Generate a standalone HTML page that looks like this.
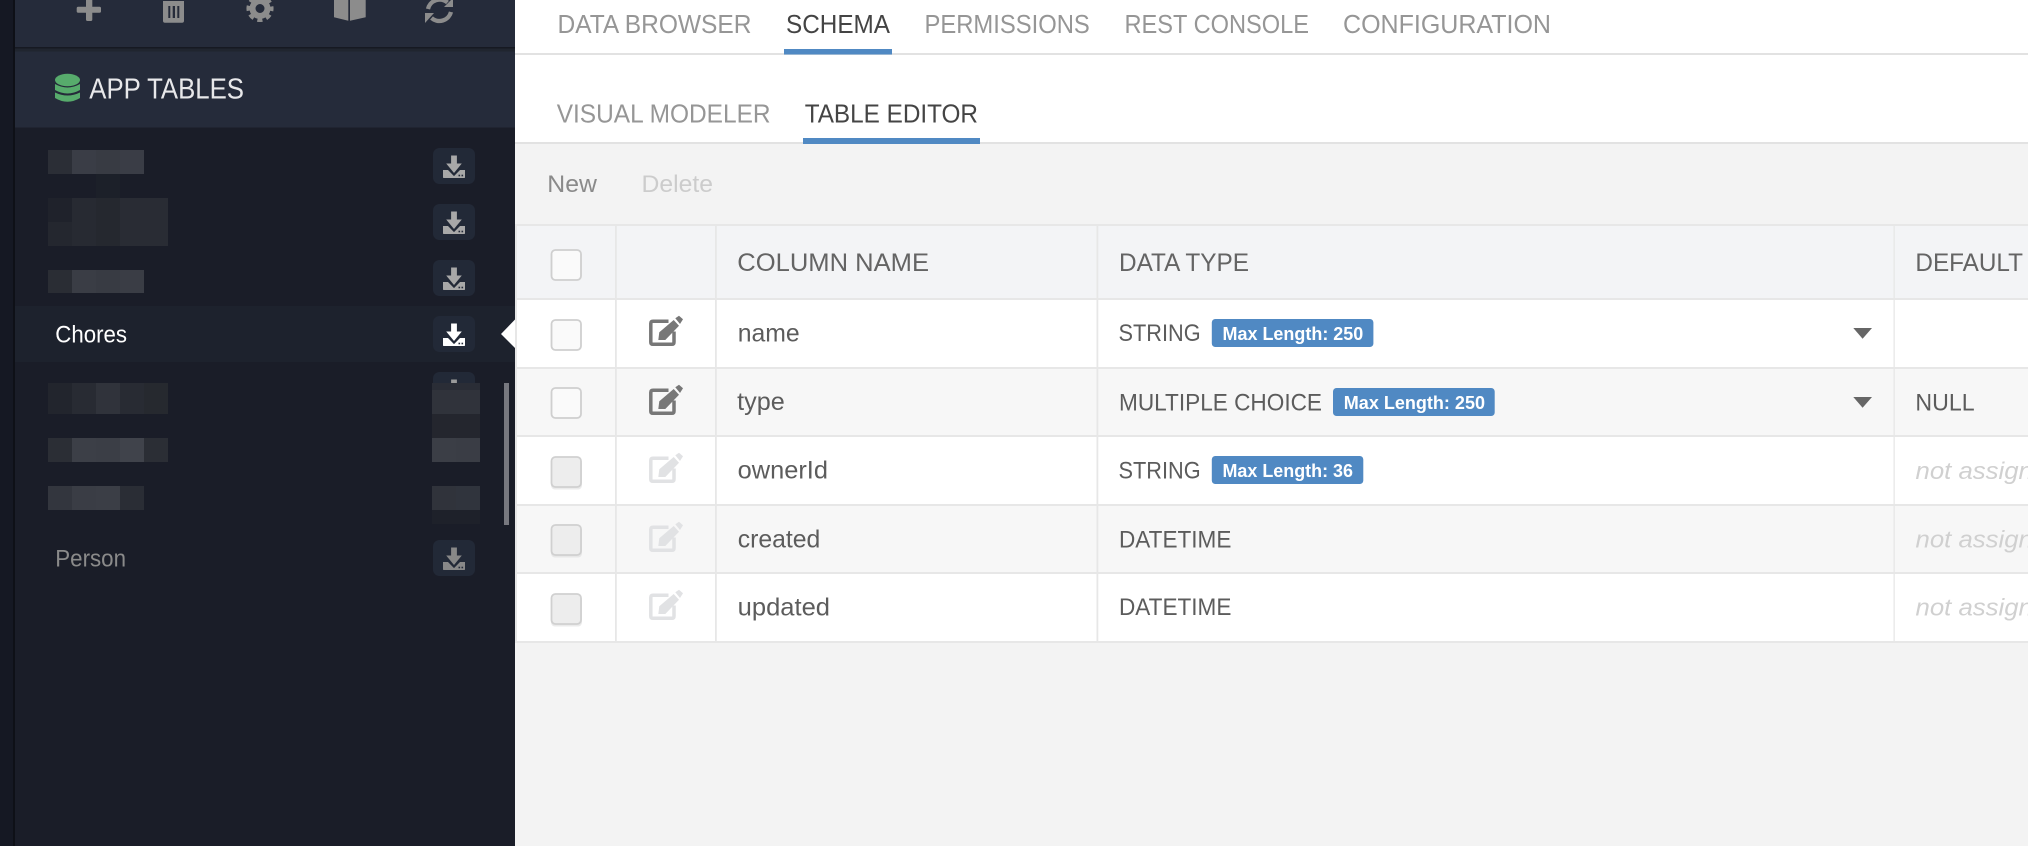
<!DOCTYPE html>
<html>
<head>
<meta charset="utf-8">
<title>App Tables Schema</title>
<style>
html,body{margin:0;padding:0;width:2028px;height:846px;overflow:hidden;background:#f3f3f3}
svg{display:block}
text{font-family:"Liberation Sans",Arial,sans-serif}
.tab{font-size:25.5px;fill:#969696}
.act{fill:#444}
.hd{font-size:25.3px;fill:#646464}
.cell{font-size:24px;fill:#5c5c5c}
.low{font-size:25px;fill:#5c5c5c}
.badge{font-size:18.5px;font-weight:bold;fill:#fff}
.na{font-size:24.5px;font-style:italic;fill:#d0d0d0}
</style>
</head>
<body>
<svg width="2028" height="846" viewBox="0 0 2028 846" xmlns="http://www.w3.org/2000/svg">
<defs>
<g id="dl">
  <path d="M8.100 0H13.900V8H18.800L11 17.500L3.200 8H8.100Z" fill="currentColor"/>
  <path d="M0 14.500H5L11 20.600L17 14.500H22V21.700Q22 22.500 21.200 22.500H0.800Q0 22.500 0 21.700Z" fill="currentColor"/>
  <rect x="15.500" y="19.200" width="1.600" height="1.600" fill="#222937"/>
  <rect x="18.500" y="19.200" width="1.600" height="1.600" fill="#222937"/>
</g>
<g id="edit">
  <path d="M19.500 5.200H4Q1.800 5.200 1.800 7.400V26.100Q1.800 28.300 4 28.300H22.800Q25 28.300 25 26.100V15.500" fill="none" stroke="currentColor" stroke-width="3.500"/>
  <path d="M9.300 24L10.300 16.300L24.700 4L30 9.700L16.300 24Z" fill="currentColor"/>
  <path d="M26.300 2.300L30 -0.300L34 3.300L31 8Z" fill="currentColor"/>
</g>
</defs>

<!-- main -->
<rect width="2028" height="846" fill="#f3f3f3"/>
<rect x="515" y="0" width="1513" height="144" fill="#fff"/>
<rect x="515" y="53" width="1513" height="2" fill="#e2e2e2"/>
<rect x="784" y="49" width="108" height="5.500" fill="#5089c3"/>
<text class="tab" x="557.500" y="33" textLength="194" lengthAdjust="spacingAndGlyphs">DATA BROWSER</text>
<text class="tab act" x="786" y="33" textLength="104" lengthAdjust="spacingAndGlyphs">SCHEMA</text>
<text class="tab" x="924.500" y="33" textLength="165.300" lengthAdjust="spacingAndGlyphs">PERMISSIONS</text>
<text class="tab" x="1124.500" y="33" textLength="184.500" lengthAdjust="spacingAndGlyphs">REST CONSOLE</text>
<text class="tab" x="1343" y="33" textLength="208" lengthAdjust="spacingAndGlyphs">CONFIGURATION</text>

<rect x="515" y="142" width="1513" height="2" fill="#e2e2e2"/>
<rect x="803" y="138" width="177" height="6" fill="#5089c3"/>
<text class="tab" x="556.700" y="122.300" textLength="213.900" lengthAdjust="spacingAndGlyphs">VISUAL MODELER</text>
<text class="tab act" x="804.700" y="122.300" textLength="173.300" lengthAdjust="spacingAndGlyphs">TABLE EDITOR</text>

<text x="547.300" y="192" font-size="24.500" fill="#8a8a8a" textLength="49.600" lengthAdjust="spacingAndGlyphs">New</text>
<text x="641.500" y="192" font-size="24.500" fill="#cccccc" textLength="71.500" lengthAdjust="spacingAndGlyphs">Delete</text>

<!-- table -->
<rect x="515" y="226" width="1513" height="73" fill="#f3f4f6"/>
<rect x="515" y="299" width="1513" height="69" fill="#ffffff"/>
<rect x="515" y="368" width="1513" height="68" fill="#f7f7f7"/>
<rect x="515" y="436" width="1513" height="69" fill="#ffffff"/>
<rect x="515" y="505" width="1513" height="68" fill="#f7f7f7"/>
<rect x="515" y="573" width="1513" height="69" fill="#ffffff"/>
<g fill="#e7e7e7">
  <rect x="515" y="224" width="1513" height="2"/>
  <rect x="515" y="298" width="1513" height="2"/>
  <rect x="515" y="367" width="1513" height="2"/>
  <rect x="515" y="435" width="1513" height="2"/>
  <rect x="515" y="504" width="1513" height="2"/>
  <rect x="515" y="572" width="1513" height="2"/>
  <rect x="515" y="641" width="1513" height="2"/>
  <rect x="515" y="224" width="2" height="419"/>
  <rect x="615" y="224" width="1.800" height="419"/>
  <rect x="715" y="224" width="1.800" height="419"/>
  <rect x="1096.500" y="224" width="1.800" height="419"/>
  <rect x="1893.500" y="224" width="1.300" height="419"/>
</g>

<!-- checkboxes -->
<g fill="#fafafa" stroke="#cfcfcf" stroke-width="1.800">
  <rect x="551.500" y="250" width="29.500" height="30" rx="4"/>
  <rect x="551.500" y="320" width="29.500" height="30" rx="4"/>
  <rect x="551.500" y="388" width="29.500" height="30" rx="4"/>
</g>
<g fill="#d8d8d8" opacity="0.5">
  <rect x="551" y="459" width="31" height="30.500" rx="4"/>
  <rect x="551" y="527" width="31" height="30.500" rx="4"/>
  <rect x="551" y="596" width="31" height="30.500" rx="4"/>
</g>
<g fill="#ededed" stroke="#d0d0d0" stroke-width="1.800">
  <rect x="551.500" y="457" width="29.500" height="30" rx="4"/>
  <rect x="551.500" y="525" width="29.500" height="30" rx="4"/>
  <rect x="551.500" y="594" width="29.500" height="30" rx="4"/>
</g>

<!-- edit icons -->
<use href="#edit" x="649" y="316" color="#777777"/>
<use href="#edit" x="649" y="385" color="#777777"/>
<use href="#edit" x="649" y="453" color="#e1e2e4"/>
<use href="#edit" x="649" y="522" color="#e1e2e4"/>
<use href="#edit" x="649" y="590" color="#e1e2e4"/>

<!-- headers -->
<text class="hd" x="737.300" y="271.200" textLength="191.700" lengthAdjust="spacingAndGlyphs">COLUMN NAME</text>
<text class="hd" x="1119" y="271.200" textLength="130" lengthAdjust="spacingAndGlyphs">DATA TYPE</text>
<text class="hd" x="1915.400" y="271.200" textLength="107.600" lengthAdjust="spacingAndGlyphs">DEFAULT</text>

<!-- col names -->
<text class="low" x="737.700" y="341.500" textLength="62" lengthAdjust="spacingAndGlyphs">name</text>
<text class="low" x="737.200" y="410" textLength="47.600" lengthAdjust="spacingAndGlyphs">type</text>
<text class="low" x="737.700" y="478.700" textLength="90.300" lengthAdjust="spacingAndGlyphs">ownerId</text>
<text class="low" x="737.700" y="547.500" textLength="82.600" lengthAdjust="spacingAndGlyphs">created</text>
<text class="low" x="737.700" y="615.500" textLength="92.300" lengthAdjust="spacingAndGlyphs">updated</text>

<!-- data types -->
<text class="cell" x="1118.500" y="341" textLength="82.100" lengthAdjust="spacingAndGlyphs">STRING</text>
<rect x="1211.800" y="319" width="161.600" height="28" rx="3.500" fill="#5089c3"/>
<text class="badge" x="1222.500" y="339.800" textLength="140.800" lengthAdjust="spacingAndGlyphs">Max Length: 250</text>
<path d="M1853.300 328H1872L1862.600 338.700Z" fill="#666"/>

<text class="cell" x="1119" y="410.400" textLength="203" lengthAdjust="spacingAndGlyphs">MULTIPLE CHOICE</text>
<rect x="1333" y="388" width="161.700" height="28" rx="3.500" fill="#5089c3"/>
<text class="badge" x="1343.800" y="408.800" textLength="141.200" lengthAdjust="spacingAndGlyphs">Max Length: 250</text>
<path d="M1853.300 397H1872L1862.600 407.700Z" fill="#666"/>

<text class="cell" x="1118.500" y="478.300" textLength="82.100" lengthAdjust="spacingAndGlyphs">STRING</text>
<rect x="1211.800" y="456" width="151.500" height="28" rx="3.500" fill="#5089c3"/>
<text class="badge" x="1222.500" y="477" textLength="130.500" lengthAdjust="spacingAndGlyphs">Max Length: 36</text>

<text class="cell" x="1119" y="547.300" textLength="112.400" lengthAdjust="spacingAndGlyphs">DATETIME</text>
<text class="cell" x="1119" y="615" textLength="112.400" lengthAdjust="spacingAndGlyphs">DATETIME</text>

<!-- default -->
<text class="cell" x="1915.400" y="410.400" textLength="59.200" lengthAdjust="spacingAndGlyphs">NULL</text>
<text class="na" x="1915.500" y="479" textLength="146" lengthAdjust="spacingAndGlyphs">not assigned</text>
<text class="na" x="1915.500" y="547.300" textLength="146" lengthAdjust="spacingAndGlyphs">not assigned</text>
<text class="na" x="1915.500" y="615.700" textLength="146" lengthAdjust="spacingAndGlyphs">not assigned</text>

<!-- sidebar -->
<rect x="0" y="0" width="515" height="846" fill="#1a1d28"/>
<rect x="0" y="0" width="13" height="846" fill="#151823"/>
<rect x="13" y="0" width="2" height="846" fill="#0e1017"/>
<rect x="15" y="0" width="500" height="127.500" fill="#252b3a"/>
<rect x="15" y="47" width="500" height="1.500" fill="#161922"/>
<rect x="15" y="48.500" width="500" height="3" fill="#20252f"/>
<text x="-7" y="191" font-size="15" fill="#8a8a8a">s</text>

<!-- toolbar icons -->
<g fill="#8c8c8c">
  <rect x="76.700" y="6.700" width="24.300" height="6" rx="1.500"/>
  <rect x="86" y="-3" width="6.300" height="24" rx="1.500"/>
  <path fill-rule="evenodd" d="M163 1H184V20.800Q184 22.800 182 22.800H165Q163 22.800 163 20.800ZM168.300 6V18H170.300V6ZM172.700 6V18H175V6ZM177.300 6V18H179.300V6Z"/>
  <path d="M334 -2H348.300V20.700L334 17.300ZM350 -2H365.700V17.300L350 20.700Z"/>
  <path d="M453 -2V7H444Z"/>
  <path d="M425 13H434L425 23Z"/>
</g>
<circle cx="260" cy="8.500" r="7.500" fill="none" stroke="#8c8c8c" stroke-width="6"/>
<circle cx="260" cy="8.500" r="11.300" fill="none" stroke="#8c8c8c" stroke-width="4.500" stroke-dasharray="5 3.880" stroke-dashoffset="2.500"/>
<path d="M428 9A12 12 0 0 1 447.500 2.500" fill="none" stroke="#8c8c8c" stroke-width="4.300"/>
<path d="M451 12A12 12 0 0 1 431.500 18" fill="none" stroke="#8c8c8c" stroke-width="4.300"/>

<!-- db icon -->
<g fill="#57ab6c">
  <ellipse cx="67.500" cy="80" rx="12.500" ry="6.200"/>
  <path d="M55 84Q67.500 91 80 84V90Q67.500 97 55 90Z"/>
  <path d="M55 92.500Q67.500 98.500 80 92.500V98Q67.500 105.500 55 98Z"/>
</g>
<text x="89.300" y="98.500" font-size="29" fill="#e8e8ea" textLength="154.700" lengthAdjust="spacingAndGlyphs">APP TABLES</text>

<!-- list buttons -->
<rect x="15" y="306" width="500" height="56" fill="#1d222d"/>
<g fill="#222937">
  <rect x="433" y="148" width="42" height="36" rx="6.500"/>
  <rect x="433" y="204" width="42" height="36" rx="6.500"/>
  <rect x="433" y="260" width="42" height="36" rx="6.500"/>
  <rect x="433" y="316" width="42" height="36" rx="6.500"/>
  <rect x="433" y="372" width="42" height="36" rx="6.500"/>
  <rect x="433" y="540" width="42" height="36" rx="6.500"/>
</g>
<use href="#dl" x="443" y="155.500" color="#a8a8a8"/>
<use href="#dl" x="443" y="211.500" color="#a8a8a8"/>
<use href="#dl" x="443" y="267.500" color="#a8a8a8"/>
<use href="#dl" x="443" y="323.500" color="#ffffff"/>
<use href="#dl" x="443" y="379.500" color="#9a9a9a"/>
<use href="#dl" x="443" y="547.500" color="#888888"/>
<text x="55.300" y="342.500" font-size="24" fill="#ffffff" textLength="71.700" lengthAdjust="spacingAndGlyphs">Chores</text>
<text x="55.300" y="566.500" font-size="24" fill="#8a8a8a" textLength="70.700" lengthAdjust="spacingAndGlyphs">Person</text>
<path d="M515 319.500V348L501 334Z" fill="#fff"/>

<!-- pixelated blocks -->
<g shape-rendering="crispEdges">
  <rect x="48" y="150" width="24" height="24" fill="#2b2e36"/>
  <rect x="72" y="150" width="24" height="24" fill="#3a3d46"/>
  <rect x="96" y="150" width="24" height="24" fill="#383b43"/>
  <rect x="120" y="150" width="24" height="24" fill="#3a3d46"/>
  <rect x="96" y="174" width="24" height="24" fill="#1c2029"/>
  <rect x="48" y="198" width="24" height="24" fill="#1f222b"/>
  <rect x="48" y="222" width="24" height="24" fill="#24272f"/>
  <rect x="72" y="198" width="24" height="48" fill="#272a32"/>
  <rect x="96" y="198" width="24" height="48" fill="#25282f"/>
  <rect x="120" y="198" width="48" height="48" fill="#292c34"/>
  <rect x="48" y="270" width="24" height="23" fill="#2a2d34"/>
  <rect x="72" y="270" width="24" height="23" fill="#3a3d45"/>
  <rect x="96" y="270" width="24" height="23" fill="#383b43"/>
  <rect x="120" y="270" width="24" height="23" fill="#3a3d45"/>
  <rect x="48" y="383" width="24" height="31" fill="#22252d"/>
  <rect x="72" y="383" width="24" height="31" fill="#282b33"/>
  <rect x="96" y="383" width="24" height="31" fill="#30333b"/>
  <rect x="120" y="383" width="24" height="31" fill="#282b33"/>
  <rect x="144" y="383" width="24" height="31" fill="#26292f"/>
  <rect x="48" y="438" width="24" height="24" fill="#2b2e35"/>
  <rect x="72" y="438" width="24" height="24" fill="#3c3f47"/>
  <rect x="96" y="438" width="24" height="24" fill="#3b3e46"/>
  <rect x="120" y="438" width="24" height="24" fill="#40434b"/>
  <rect x="144" y="438" width="24" height="24" fill="#2b2e35"/>
  <rect x="48" y="486" width="24" height="24" fill="#33363e"/>
  <rect x="72" y="486" width="24" height="24" fill="#3a3d45"/>
  <rect x="96" y="486" width="24" height="24" fill="#3b3e46"/>
  <rect x="120" y="486" width="24" height="24" fill="#2a2d35"/>
  <rect x="432" y="383" width="48" height="7" fill="#2a2d36"/>
  <rect x="432" y="390" width="48" height="24" fill="#30333b"/>
  <rect x="432" y="414" width="48" height="24" fill="#24262e"/>
  <rect x="432" y="438" width="24" height="24" fill="#3b3e46"/>
  <rect x="456" y="438" width="24" height="24" fill="#3a3d45"/>
  <rect x="432" y="462" width="48" height="24" fill="#1a1d28"/>
  <rect x="432" y="486" width="24" height="24" fill="#30333b"/>
  <rect x="456" y="486" width="24" height="24" fill="#30343d"/>
  <rect x="432" y="510" width="48" height="14" fill="#1e212a"/>
</g>
<rect x="504" y="383" width="5" height="142" fill="#77787f"/>
</svg>
</body>
</html>
